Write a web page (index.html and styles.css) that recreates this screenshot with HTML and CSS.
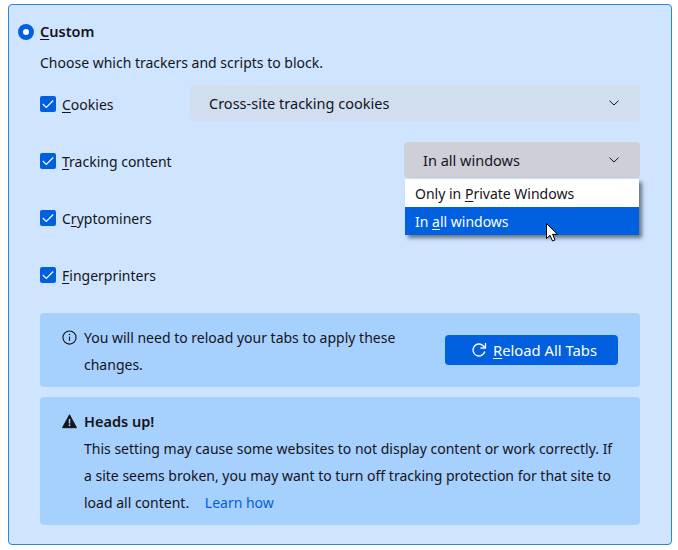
FILE: index.html
```html
<!DOCTYPE html>
<html lang="en">
<head>
<meta charset="utf-8">
<title>Custom tracking protection</title>
<link rel="stylesheet" href="styles.css">
</head>
<body>
<section class="panel">
  <div class="heading">
    <span class="radio"></span>
    <span class="title"><u>C</u>ustom</span>
  </div>
  <div class="body">
    <p class="intro">Choose which trackers and scripts to block.</p>
    <div class="rows">
      <div class="row">
        <label class="check">
          <svg class="box" viewBox="0 0 16 16"><rect width="16" height="16" rx="2" fill="#0060df"/><path d="M2.800 8 6.300 11.500 13.200 4.500" fill="none" stroke="#fff" stroke-width="1.100"/></svg>
          <span><u>C</u>ookies</span>
        </label>
        <div class="select select-wide">
          <span>Cross-site tracking cookies</span>
          <svg class="chev" viewBox="0 0 10 6"><path d="M.5.7 5 5 9.500.7" fill="none" stroke="#15141a" stroke-width="1"/></svg>
        </div>
      </div>
      <div class="row">
        <label class="check">
          <svg class="box" viewBox="0 0 16 16"><rect width="16" height="16" rx="2" fill="#0060df"/><path d="M2.800 8 6.300 11.500 13.200 4.500" fill="none" stroke="#fff" stroke-width="1.100"/></svg>
          <span><u>T</u>racking content</span>
        </label>
        <div class="select select-open">
          <span>In all windows</span>
          <svg class="chev" viewBox="0 0 10 6"><path d="M.5.7 5 5 9.500.7" fill="none" stroke="#15141a" stroke-width="1"/></svg>
          <ul class="menu">
            <li class="item">Only in <u>P</u>rivate Windows</li>
            <li class="item item-active">In <u>a</u>ll windows</li>
          </ul>
          <svg class="cursor" viewBox="0 0 13 19"><path d="M.5.500V15.500L4 12.300 6.500 18 9 17 6.600 11.300H11.500Z" fill="#fff" stroke="#000" stroke-width="1"/></svg>
        </div>
      </div>
      <div class="row">
        <label class="check">
          <svg class="box" viewBox="0 0 16 16"><rect width="16" height="16" rx="2" fill="#0060df"/><path d="M2.800 8 6.300 11.500 13.200 4.500" fill="none" stroke="#fff" stroke-width="1.100"/></svg>
          <span>C<u>r</u>yptominers</span>
        </label>
      </div>
      <div class="row">
        <label class="check">
          <svg class="box" viewBox="0 0 16 16"><rect width="16" height="16" rx="2" fill="#0060df"/><path d="M2.800 8 6.300 11.500 13.200 4.500" fill="none" stroke="#fff" stroke-width="1.100"/></svg>
          <span><u>F</u>ingerprinters</span>
        </label>
      </div>
    </div>
    <div class="notice notice-reload">
      <svg class="icon" viewBox="0 0 16 16"><circle cx="8" cy="8" r="7" fill="none" stroke="#15141a" stroke-width="1.200"/><rect x="7.400" y="7" width="1.200" height="4.500" fill="#15141a"/><circle cx="8" cy="4.900" r=".8" fill="#15141a"/></svg>
      <p class="notice-text">You will need to reload your tabs to apply these changes.</p>
      <button class="reload">
        <svg class="reload-icon" viewBox="0 0 16 16"><path d="M13.800 9.500A6 6 0 1 1 12.200 3.700L14 5.500" fill="none" stroke="#fff" stroke-width="1.300"/><path d="M14.500 1V6H9.500" fill="none" stroke="#fff" stroke-width="1.300"/></svg>
        <span><u>R</u>eload All Tabs</span>
      </button>
    </div>
    <div class="notice notice-warn">
      <svg class="icon" viewBox="0 0 16 16"><path d="M8 .8.500 14.600H15.500Z" fill="#15141a" stroke="#15141a" stroke-linejoin="round"/><rect x="7.200" y="5.200" width="1.600" height="5" fill="#a6d0fd"/><circle cx="8" cy="12" r="1" fill="#a6d0fd"/></svg>
      <div class="warn-text">
        <strong>Heads up!</strong>
        <p>This setting may cause some websites to not display content or work correctly. If a site seems broken, you may want to turn off tracking protection for that site to load all content. <a href="#" class="link">Learn how</a></p>
      </div>
    </div>
  </div>
</section>
</body>
</html>
```
FILE: styles.css
```css
* { box-sizing: border-box; }
html, body { margin: 0; padding: 0; background: #fff; }
body {
  padding: 4px 6px 5px 8px;
  font-family: "Noto Sans", "Open Sans", sans-serif;
  font-size: 14px;
  line-height: 27px;
  color: #15141a;
  width: 678px;
  height: 550px;
  overflow: hidden;
}
u { text-underline-offset: 2px; }
p { margin: 0; }
.panel {
  width: 664px;
  height: 541px;
  background: #cfe5ff;
  border: 1px solid #2f86d8;
  border-radius: 4px;
  padding: 13px 31px 0 9px;
}
.heading { display: flex; align-items: center; gap: 6px; }
.radio {
  width: 16px;
  height: 16px;
  border-radius: 50%;
  border: 5px solid #0060df;
  background: #fff;
}
.title { font-weight: 600; font-size: 14.5px; }
.body { padding-left: 22px; }
.intro { margin-top: 4px; }
.rows { margin-top: 9px; display: flex; flex-direction: column; gap: 21px; }
.row { display: flex; align-items: center; justify-content: space-between; height: 36px; }
.check { display: flex; align-items: center; gap: 6px; padding-top: 2px; }
.box { width: 16px; height: 16px; flex: none; }
.select {
  position: relative;
  height: 36px;
  border-radius: 4px;
  display: flex;
  align-items: center;
  justify-content: space-between;
  padding: 0 21px 0 19px;
  font-size: 14.5px;
}
.select-wide { width: 450px; background: #d1deef; }
.select-open { width: 236px; background: #cfcfd8; }
.chev { width: 10px; height: 6px; }
.menu {
  position: absolute;
  left: 1px;
  top: 37px;
  width: 234px;
  margin: 0;
  padding: 0;
  list-style: none;
  background: #fff;
  box-shadow: 3px 3px 4px rgba(0,0,0,.5);
  font-size: 14px;
}
.item { height: 28px; line-height: 30px; padding-left: 10px; }
.item-active { background: #0060df; color: #fff; }
.cursor { position: absolute; left: 142px; top: 81px; width: 13px; height: 19px; }
.notice {
  display: flex;
  background: #a6d0fd;
  border-radius: 4px;
  padding: 11px 22px 8px 22px;
}
.notice-reload { margin-top: 21px; height: 74px; align-items: flex-start; }
.notice-warn { margin-top: 10px; height: 128px; }
.icon { width: 15px; height: 15px; flex: none; margin-top: 6px; margin-right: 7px; }
.notice-text { width: 330px; }
.reload {
  margin: 11px 0 0 auto;
  width: 173px;
  height: 30px;
  border: 0;
  border-radius: 4px;
  background: #0060df;
  color: #fff;
  font: inherit;
  font-size: 14.8px;
  display: flex;
  align-items: center;
  justify-content: center;
  gap: 6px;
  padding: 0 0 0 5px;
}
.reload-icon { width: 16px; height: 16px; }
.warn-text strong { font-weight: 600; display: block; font-size: 14.5px; }
.link { color: #0060df; text-decoration: none; margin-left: 12px; }
```
